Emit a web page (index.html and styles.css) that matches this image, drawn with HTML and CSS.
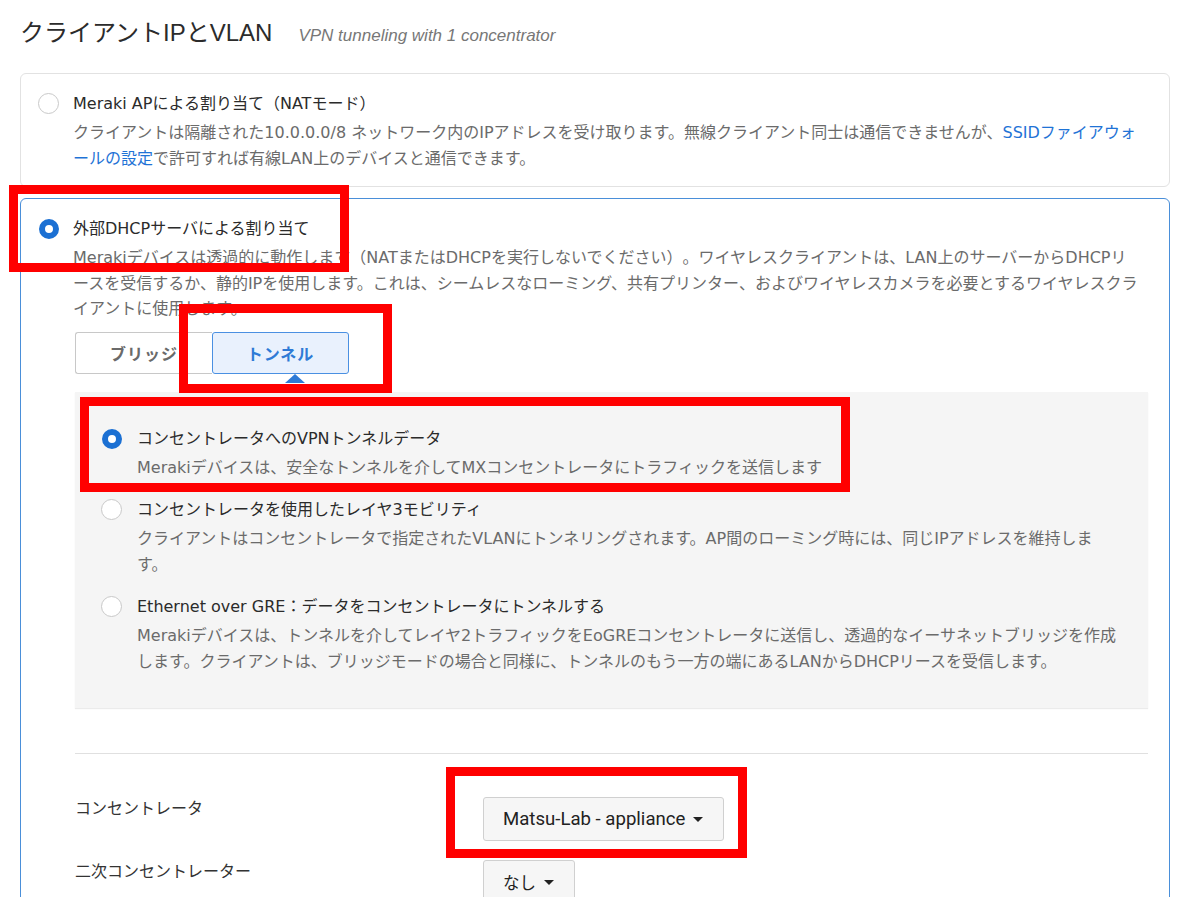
FILE: index.html
```html
<!DOCTYPE html>
<html lang="ja">
<head>
<meta charset="utf-8">
<title>クライアントIPとVLAN</title>
<link rel="stylesheet" href="styles.css">
</head>
<body>
<div class="page">
  <header class="head">
    <h1 class="title">クライアントIPとVLAN</h1>
    <span class="subtitle">VPN tunneling with 1 concentrator</span>
  </header>

  <section class="card">
    <span class="radio"></span>
    <div class="body">
      <div class="label">Meraki APによる割り当て（NATモード）</div>
      <p class="desc">クライアントは隔離された10.0.0.0/8 ネットワーク内のIPアドレスを受け取ります。無線クライアント同士は通信できませんが、<a class="link">SSIDファイアウォ<br>ールの設定</a>で許可すれば有線LAN上のデバイスと通信できます。</p>
    </div>
  </section>

  <section class="card card-active">
    <span class="radio radio-on"></span>
    <div class="body">
      <div class="label">外部DHCPサーバによる割り当て</div>
      <p class="desc">Merakiデバイスは透過的に動作します（NATまたはDHCPを実行しないでください）。ワイヤレスクライアントは、LAN上のサーバーからDHCPリ<br>ースを受信するか、静的IPを使用します。これは、シームレスなローミング、共有プリンター、およびワイヤレスカメラを必要とするワイヤレスクラ<br>イアントに使用します。</p>

      <div class="seg">
        <button class="seg-btn seg-left">ブリッジ</button>
        <button class="seg-btn seg-on">トンネル</button>
      </div>

      <div class="panel">
        <div class="opt">
          <span class="radio radio-on"></span>
          <div class="body">
            <div class="label">コンセントレータへのVPNトンネルデータ</div>
            <p class="desc">Merakiデバイスは、安全なトンネルを介してMXコンセントレータにトラフィックを送信します</p>
          </div>
        </div>
        <div class="opt">
          <span class="radio"></span>
          <div class="body">
            <div class="label">コンセントレータを使用したレイヤ3モビリティ</div>
            <p class="desc">クライアントはコンセントレータで指定されたVLANにトンネリングされます。AP間のローミング時には、同じIPアドレスを維持しま<br>す。</p>
          </div>
        </div>
        <div class="opt">
          <span class="radio"></span>
          <div class="body">
            <div class="label">Ethernet over GRE：データをコンセントレータにトンネルする</div>
            <p class="desc">Merakiデバイスは、トンネルを介してレイヤ2トラフィックをEoGREコンセントレータに送信し、透過的なイーサネットブリッジを作成<br>します。クライアントは、ブリッジモードの場合と同様に、トンネルのもう一方の端にあるLANからDHCPリースを受信します。</p>
          </div>
        </div>
      </div>

      <hr class="divider">

      <div class="settings">
        <div class="set-label">コンセントレータ</div>
        <div><button class="dropdown">Matsu-Lab - appliance<span class="caret"></span></button></div>
        <div class="set-label">二次コンセントレーター</div>
        <div><button class="dropdown"><span class="dd-ja">なし</span><span class="caret"></span></button></div>
      </div>
    </div>
  </section>

  <div class="mark mark-1"></div>
  <div class="mark mark-2"></div>
  <div class="mark mark-3"></div>
  <div class="mark mark-4"></div>
</div>
</body>
</html>
```

FILE: styles.css
```css
* { box-sizing: border-box; }

html, body {
  margin: 0;
  padding: 0;
  background: #ffffff;
}

body {
  font-family: "Liberation Sans", "Noto Sans CJK JP", sans-serif;
  color: #2b2b2b;
  line-break: normal;
  text-spacing-trim: space-all;
}

.page {
  position: relative;
  padding: 17px 30px 0 20px;
}

.head {
  display: flex;
  align-items: baseline;
  gap: 26px;
  margin-bottom: 24px;
}

.title {
  margin: 0;
  font-size: 24px;
  line-height: 32px;
  font-weight: 400;
  color: #2b2b2b;
}

.subtitle {
  font-size: 17px;
  font-style: italic;
  color: #777;
}

.card {
  display: grid;
  grid-template-columns: 22px 1fr;
  column-gap: 13px;
  align-items: start;
  border: 1px solid #e2e2e2;
  border-radius: 6px;
  padding: 18px 19px 15px 17px;
  margin-bottom: 11px;
}

.card-active {
  border-color: #4a8fd9;
  padding-bottom: 60px;
}

.radio {
  display: block;
  width: 21px;
  height: 21px;
  margin-top: 1px;
  border-radius: 50%;
  border: 1px solid #c9c9c9;
  background: #fff;
}

.radio-on {
  width: 20px;
  height: 20px;
  margin: 2px 0 0 1px;
  border: 6px solid #1b70d3;
}

.label,
.desc,
.set-label {
  font-family: "DejaVu Sans", "Noto Sans CJK JP", sans-serif;
}

.label {
  font-size: 16px;
  line-height: 24px;
  color: #2b2b2b;
}

.desc {
  margin: 4px 0 0;
  font-size: 16px;
  line-height: 25.5px;
  color: #6b6b6b;
}

.link {
  color: #1f73d6;
  text-decoration: none;
}

.seg {
  display: flex;
  margin: 10px 0 0 2px;
}

.seg-btn {
  position: relative;
  width: 137px;
  height: 42px;
  font-family: "Liberation Sans", "Noto Sans CJK JP", sans-serif;
  font-size: 16px;
  font-weight: 700;
  letter-spacing: 1px;
  color: #6a6a6a;
  background: #fff;
  border: 1px solid #c8c8c8;
  padding: 0;
}

.seg-left {
  border-radius: 3px 0 0 3px;
  border-right: none;
}

.seg-on {
  color: #2e7ad6;
  background: #e9f1fd;
  border-color: #4a90e2;
  border-radius: 3px;
}

.seg-on::after {
  content: "";
  position: absolute;
  left: 72px;
  top: calc(100% + 1px);
  border-left: 10px solid transparent;
  border-right: 10px solid transparent;
  border-bottom: 9px solid #2e7ad6;
}

.panel {
  margin: 18px 2px 0 2px;
  padding: 35px 20px 34px 26px;
  background: #f5f5f5;
  box-shadow: 0 1px 1px rgba(0, 0, 0, 0.08);
  display: flex;
  flex-direction: column;
  gap: 18px;
}

.opt {
  display: grid;
  grid-template-columns: 22px 1fr;
  column-gap: 14px;
  align-items: start;
}

.divider {
  margin: 45px 2px 43px 2px;
  border: none;
  border-top: 1px solid #e0e0e0;
}

.settings {
  margin-left: 2px;
  display: grid;
  grid-template-columns: 408px auto;
  row-gap: 19px;
  align-items: start;
}

.set-label {
  font-size: 16px;
  line-height: 24px;
  color: #333;
}

.dropdown {
  display: inline-flex;
  align-items: center;
  gap: 8px;
  height: 44px;
  padding: 0 20px 0 19px;
  font-family: Roboto, "Noto Sans CJK JP", sans-serif;
  font-size: 18.6px;
  color: #222;
  background: #f6f6f6;
  border: 1px solid #d0d0d0;
  border-radius: 3px;
}

.dd-ja {
  font-size: 16.5px;
}

.caret {
  display: inline-block;
  border-left: 5px solid transparent;
  border-right: 5px solid transparent;
  border-top: 5px solid #222;
}

.mark {
  position: absolute;
  border: 9px solid #ff0000;
  pointer-events: none;
}

.mark-1 { left: 9px;   top: 185px; width: 340px; height: 87px; }
.mark-2 { left: 179px; top: 304px; width: 213px; height: 89px; }
.mark-3 { left: 80px;  top: 397px; width: 770px; height: 95px; }
.mark-4 { left: 446px; top: 767px; width: 301px; height: 91px; }
```
